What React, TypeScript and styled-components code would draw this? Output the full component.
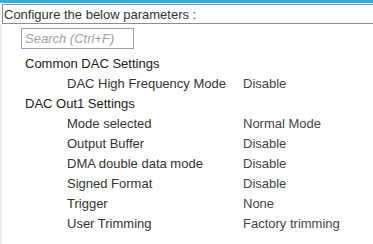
import { createGlobalStyle, styled } from "styled-components";

const GlobalStyle = createGlobalStyle`
  * {
    padding: 0;
    margin: 0;
    box-sizing: border-box;
  }
  body {
    background: #ffffff;
    font-family: "Liberation Sans", Arial, sans-serif;
    font-size: 13px;
    color: #333333;
  }
`;

const Page = styled.div`
  width: 373px;
  height: 244px;
  overflow: hidden;
  display: flex;
  flex-direction: column;
`;

const TopBar = styled.div`
  height: 3px;
  background: #3ba9dc;
`;

const Header = styled.div`
  margin-top: 1px;
  margin-left: 2px;
  height: 20px;
  border: 1px solid #8c8c8c;
  border-right: none;
  padding-left: 1px;
  display: flex;
  align-items: center;
  color: #333;
`;

const Body = styled.div`
  flex: 1;
  border-left: 2px solid #f0f0f0;
  padding-top: 4px;
`;

const SearchBox = styled.div`
  margin-left: 19px;
  width: 113px;
  height: 21px;
  border: 1px solid #a0a0a0;
  display: flex;
  align-items: center;
  padding-left: 3px;
  font-style: italic;
  color: #a0a0a0;
`;

const Tree = styled.div`
  margin-top: 4px;
`;

const Row = styled.div<{ $indent: number }>`
  height: 20px;
  display: flex;
  align-items: center;
  padding-left: ${(p) => p.$indent}px;
  color: #202020;
`;

const Label = styled.span`
  width: 176px;
  color: #333;
`;

const Value = styled.span`
  color: #444;
`;

type Param = { label: string; value: string };

const common: Param[] = [{ label: "DAC High Frequency Mode", value: "Disable" }];

const out1: Param[] = [
  { label: "Mode selected", value: "Normal Mode" },
  { label: "Output Buffer", value: "Disable" },
  { label: "DMA double data mode", value: "Disable" },
  { label: "Signed Format", value: "Disable" },
  { label: "Trigger", value: "None" },
  { label: "User Trimming", value: "Factory trimming" },
];

function ParamRow({ label, value }: Param) {
  return (
    <Row $indent={65}>
      <Label>{label}</Label>
      <Value>{value}</Value>
    </Row>
  );
}

function App() {
  return (
    <>
      <GlobalStyle />
      <Page>
        <TopBar />
        <Header>Configure the below parameters :</Header>
        <Body>
          <SearchBox>Search (Ctrl+F)</SearchBox>
          <Tree>
            <Row $indent={23}>Common DAC Settings</Row>
            {common.map((p) => (
              <ParamRow key={p.label} {...p} />
            ))}
            <Row $indent={23}>DAC Out1 Settings</Row>
            {out1.map((p) => (
              <ParamRow key={p.label} {...p} />
            ))}
          </Tree>
        </Body>
      </Page>
    </>
  );
}

export default App;
